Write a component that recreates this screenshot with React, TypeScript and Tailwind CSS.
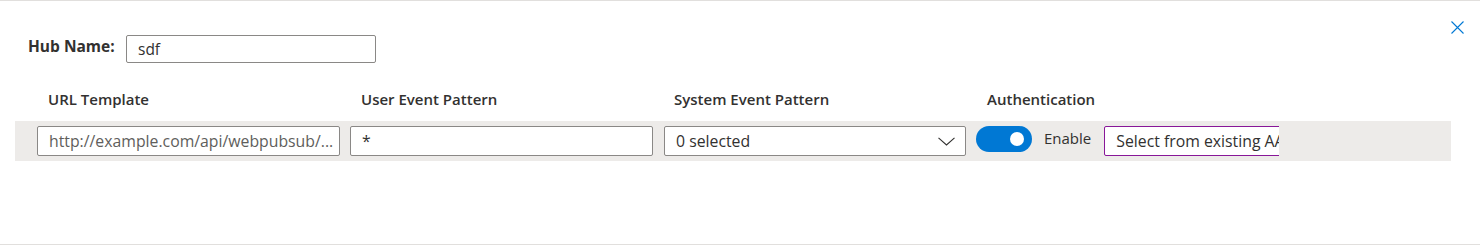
import React from 'react';

const font = { fontFamily: '"Open Sans", "Noto Sans", sans-serif' };

const headers = ['URL Template', 'User Event Pattern', 'System Event Pattern', 'Authentication'];

export default function App() {
  return (
    <div
      className="relative w-[1480px] h-[251px] bg-white border-t border-[#e1dfdd] text-[#323130]"
      style={font}
    >
      {/* close */}
      <button className="absolute left-[1451px] top-[20px] w-[13px] h-[13px] text-[#0078d4]">
        <svg width="13" height="13" viewBox="0 0 13 13" fill="none">
          <path d="M0.5 0.5L12.5 12.5M12.5 0.5L0.5 12.5" stroke="currentColor" strokeWidth="1.1" />
        </svg>
      </button>

      <div className="flex flex-col h-[244px] border-b border-[#e1dfdd]">
        {/* hub name */}
        <div className="flex items-center pl-[28px] pt-[34px]">
          <label className="text-[15.5px] font-bold w-[98px] -mt-[4px]">Hub Name:</label>
          <div className="w-[250px] h-[28px] border border-[#8a8886] rounded-[2px] flex items-center pl-[11px] pt-[1px] text-[15.5px]">
            sdf
          </div>
        </div>

        {/* column headers */}
        <div className="flex pl-[48px] mt-[25px] h-[22px] items-center">
          {headers.map((h) => (
            <div key={h} className="w-[313px] text-[15px] font-semibold">
              {h}
            </div>
          ))}
        </div>

        {/* row */}
        <div className="mt-[11px] ml-[15px] w-[1436px] h-[40px] bg-[#edebe9] flex items-center pl-[22px] gap-[10px]">
          <div className="w-[303px] h-[30px] bg-white border border-[#8a8886] rounded-[2px] flex items-center pl-[11px] pt-[2px] text-[15.8px] text-[#605e5c] whitespace-nowrap overflow-hidden">
            http://example.com/api/webpubsub/...
          </div>
          <div className="w-[303px] h-[30px] bg-white border border-[#8a8886] rounded-[2px] flex items-center pl-[11px] pt-[2px] text-[15.8px]">
            *
          </div>
          <div className="w-[302px] h-[30px] bg-white border border-[#8a8886] rounded-[2px] flex items-center justify-between pl-[11px] pr-[10px] pt-[2px] text-[15.8px] ml-[1px]">
            <span>0 selected</span>
            <svg width="17" height="9" viewBox="0 0 17 9" fill="none" className="-mt-[2px]">
              <path d="M0.5 0.8L8.5 8L16.5 0.8" stroke="#323130" strokeWidth="1.1" />
            </svg>
          </div>
          <div className="flex items-center">
            <div className="w-[56px] h-[26px] rounded-full bg-[#0078d4] relative -mt-[4px]">
              <div className="absolute right-[8px] top-[6px] w-[14px] h-[14px] rounded-full bg-white" />
            </div>
            <span className="ml-[12px] text-[15px] -mt-[6px]">Enable</span>
            <div className="ml-[13px] w-[175px] h-[30px] overflow-hidden">
              <div className="w-[270px] h-[30px] bg-white border border-[#881798] rounded-[2px] flex items-center pl-[11px] pt-[2px] text-[15.8px] whitespace-nowrap">
                Select from existing AAD apps
              </div>
            </div>
          </div>
        </div>
      </div>
    </div>
  );
}
